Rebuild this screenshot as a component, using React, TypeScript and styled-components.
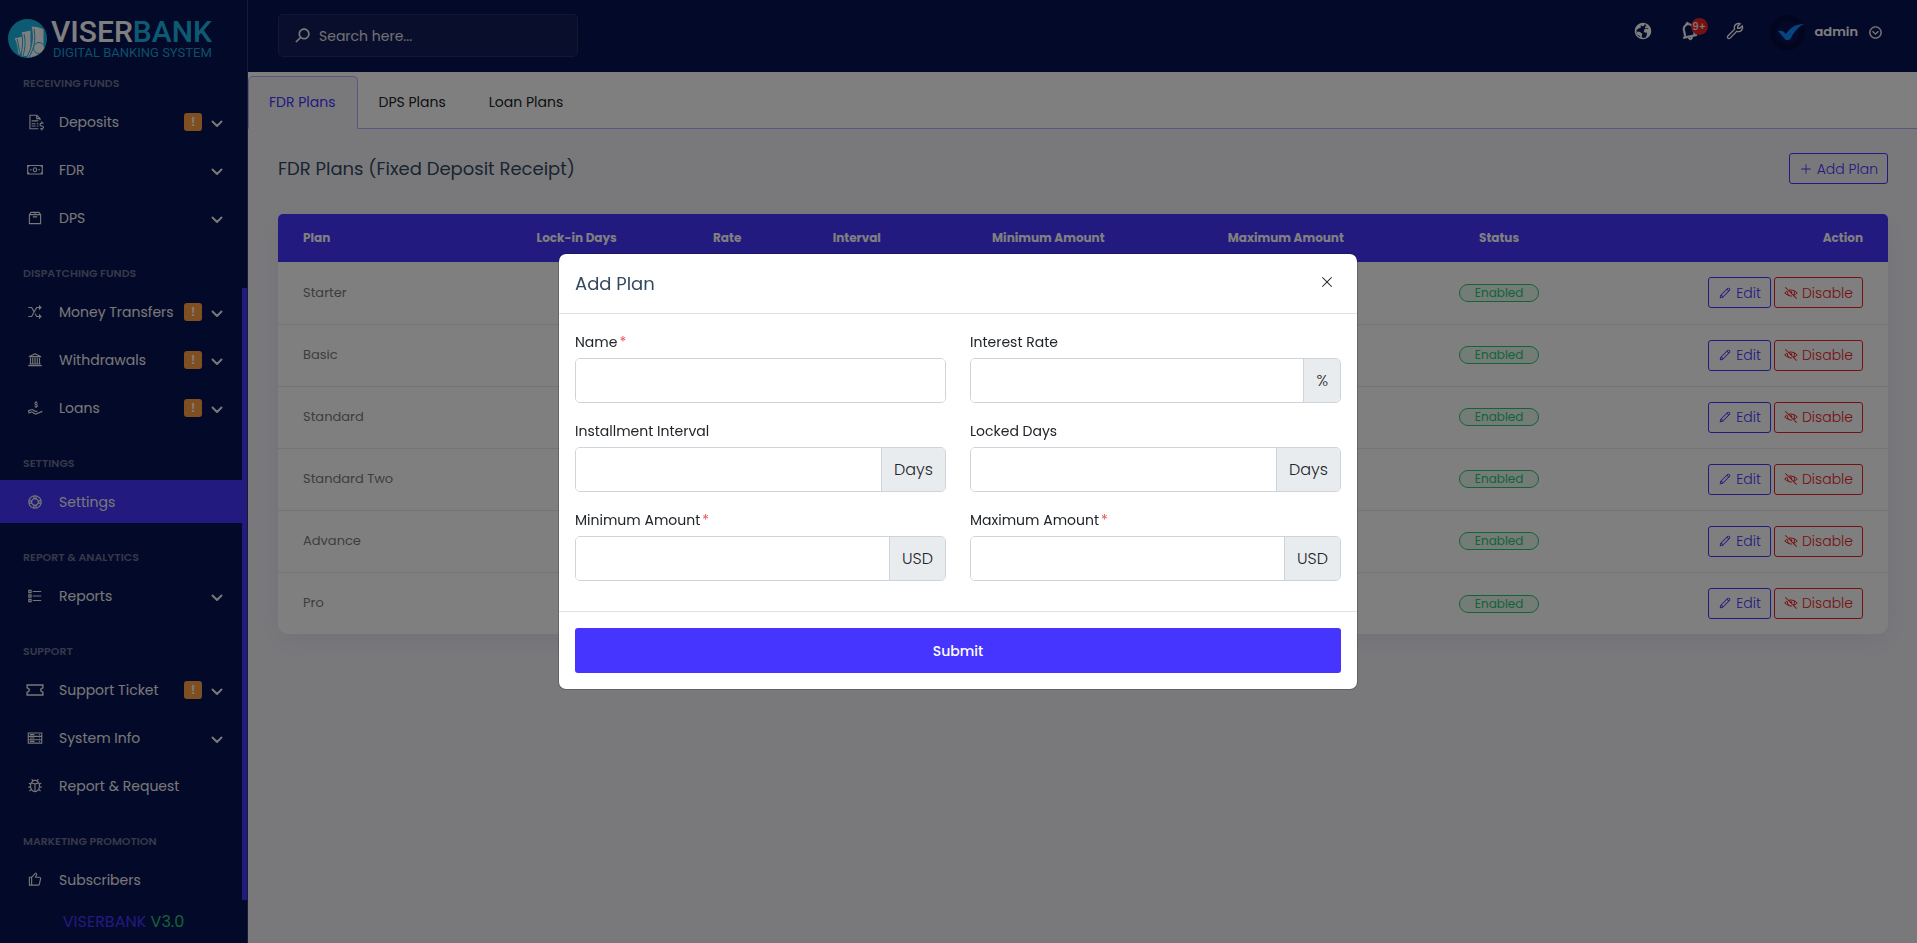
import React from "react";
import styled, { createGlobalStyle, css } from "styled-components";
import {
  LiaFileInvoiceDollarSolid,
  LiaMoneyBillSolid,
  LiaBoxSolid,
  LiaRandomSolid,
  LiaUniversitySolid,
  LiaHandHoldingUsdSolid,
  LiaLifeRingSolid,
  LiaListSolid,
  LiaServerSolid,
  LiaBugSolid,
  LiaThumbsUp,
  LiaGlobeSolid,
  LiaBell,
  LiaWrenchSolid,
  LiaSearchSolid,
  LiaChevronCircleDownSolid,
  LiaPlusSolid,
  LiaPenSolid,
  LiaEyeSlashSolid,
  LiaTimesSolid,
} from "react-icons/lia";

const color = {
  navy: "#071251",
  primary: "#4634ff",
  tabLine: "#b5adff",
  page: "#f3f3f9",
  success: "#28c76f",
  danger: "#eb2222",
  warning: "#ff9f43",
  heading: "#34495e",
  muted: "#7a7a7a",
  inputLine: "#ced4da",
};

const GlobalStyle = createGlobalStyle`
  *, *::before, *::after { box-sizing: border-box; }
  body {
    margin: 0;
    background: ${color.page};
    color: #212529;
    font-family: Poppins, Inter, "Open Sans", sans-serif;
    font-size: 14px;
    line-height: 20px;
  }
  button, input { font: inherit; }
  h1, h2, h3, p, ul { margin: 0; padding: 0; font-weight: 400; }
  ul { list-style: none; }
  a { color: inherit; text-decoration: none; }
`;

const Shell = styled.div`
  display: flex;
  min-height: 100vh;
`;

/* ---------- sidebar ---------- */

const Sidebar = styled.aside`
  display: flex;
  flex-direction: column;
  flex: none;
  width: 248px;
  height: 100vh;
  background: ${color.navy};
  border-right: 1px solid #2c3669;
`;

const Brand = styled.a`
  display: flex;
  gap: 4px;
  height: 61px;
  padding: 19px 0 0 8px;
  font-family: Roboto, "Open Sans", sans-serif;
`;

const BrandText = styled.span`
  display: flex;
  flex-direction: column;
`;

const BrandName = styled.span`
  color: #fff;
  font-size: 30px;
  font-weight: 500;
  line-height: 26px;

  em {
    color: #1bb7e5;
    font-style: normal;
  }
`;

const BrandTag = styled.span`
  padding-left: 2px;
  color: #1b9fd6;
  font-size: 13px;
  line-height: 16px;
  white-space: nowrap;
`;

const MenuArea = styled.div`
  display: flex;
  flex: 1;
  min-height: 0;
`;

const Menu = styled.nav`
  flex: 1;
  overflow: hidden;
`;

const Rail = styled.div`
  display: flex;
  flex-direction: column;
  justify-content: flex-end;
  width: 5px;
`;

const Thumb = styled.div`
  height: 73%;
  background: ${color.primary};
`;

const MenuTitle = styled.h2`
  padding: 12px 23px 7px;
  color: #6c7394;
  font-size: 11px;
  font-weight: 600;
  line-height: 20px;
  text-transform: uppercase;
`;

const MenuList = styled.ul`
  display: grid;
  gap: 5px;
  padding-bottom: 12px;
`;

const MenuLink = styled.a<{ $active?: boolean }>`
  display: flex;
  align-items: center;
  height: 43px;
  padding: 0 18px 0 26px;
  color: #f0f0f0;
  font-size: 14px;
  background: ${(p) => (p.$active ? color.primary : "transparent")};

  > svg:first-child {
    width: 18px;
    height: 18px;
    margin-right: 15px;
  }
`;

const MenuLabel = styled.span`
  flex: 1;
  white-space: nowrap;
`;

const Alert = styled.span`
  width: 18px;
  height: 18px;
  margin-right: 8px;
  border-radius: 3px;
  background: ${color.warning};
  color: #fff;
  font-size: 12px;
  font-weight: 600;
  line-height: 18px;
  text-align: center;
`;

const ArrowIcon = styled.svg`
  width: 14px;
  height: 14px;
  margin-top: 4px;
`;

const Version = styled.p`
  height: 43px;
  color: ${color.primary};
  font-size: 16px;
  line-height: 44px;
  text-align: center;

  span {
    color: ${color.success};
  }
`;

/* ---------- top bar ---------- */

const Main = styled.div`
  flex: 1;
  min-width: 0;
`;

const TopBar = styled.header`
  display: flex;
  align-items: flex-start;
  justify-content: space-between;
  height: 72px;
  padding: 14px 34px 0 30px;
  background: ${color.navy};
  color: #fff;
`;

const Search = styled.label`
  display: flex;
  align-items: center;
  gap: 8px;
  width: 300px;
  height: 43px;
  padding: 0 15px;
  border: 1px solid #263063;
  border-radius: 5px;
  background: #121c59;

  svg {
    width: 17px;
    height: 17px;
    stroke: currentColor;
    stroke-width: 1;
  }

  input {
    flex: 1;
    min-width: 0;
    padding: 0;
    border: 0;
    outline: 0;
    background: none;
    color: #fff;
    font-size: 14px;
  }

  input::placeholder {
    color: #e0e0e6;
    opacity: 1;
  }
`;

const Tools = styled.div`
  display: flex;
  align-items: center;
  gap: 24px;
  height: 36px;
`;

const ToolButton = styled.button`
  position: relative;
  display: flex;
  margin-top: -2px;
  padding: 0;
  border: 0;
  background: none;
  color: #fff;

  svg {
    width: 22px;
    height: 22px;
  }
`;

const RingingBell = styled(LiaBell)`
  stroke: currentColor;
  stroke-width: 1;
  transform: rotate(-12deg);
`;

const Count = styled.span`
  position: absolute;
  top: -2px;
  right: -8px;
  width: 17px;
  height: 17px;
  border-radius: 50%;
  background: ${color.danger};
  font-size: 10px;
  font-weight: 500;
  line-height: 17px;
  text-align: center;
`;

const Profile = styled.button`
  display: flex;
  align-items: center;
  gap: 10px;
  padding: 0;
  border: 0;
  background: none;
  color: #fff;
  font-size: 13px;
  font-weight: 600;

  > svg:last-child {
    width: 15px;
    height: 15px;
    stroke: currentColor;
    stroke-width: 1;
  }
`;

/* ---------- tabs and page head ---------- */

const Tabs = styled.nav`
  display: flex;
  align-items: flex-end;
  height: 57px;
  border-bottom: 1px solid ${color.tabLine};
  background: #fff;
`;

const Tab = styled.a<{ $active?: boolean }>`
  height: 53px;
  margin-bottom: -1px;
  padding: 0 21px 0 20px;
  border: 1px solid transparent;
  border-radius: 5px 5px 0 0;
  font-size: 14px;
  line-height: 51px;

  ${(p) =>
    p.$active &&
    css`
      border-color: ${color.tabLine} ${color.tabLine} ${color.page};
      background: ${color.page};
      color: ${color.primary};
    `}
`;

const Content = styled.main`
  padding: 24px 29px 30px 30px;
`;

const PageHead = styled.div`
  display: flex;
  align-items: center;
  justify-content: space-between;
  margin-bottom: 30px;
`;

const PageTitle = styled.h1`
  color: ${color.heading};
  font-size: 18px;
`;

const OutlineButton = styled.button<{ $tone: string }>`
  display: inline-flex;
  align-items: center;
  gap: 4px;
  height: 31px;
  padding: 0 9px;
  border: 1px solid ${(p) => p.$tone};
  border-radius: 3px;
  background: none;
  color: ${(p) => p.$tone};
  font-size: 14px;
  font-weight: 300;

  svg {
    width: 14px;
    height: 14px;
  }
`;

/* ---------- table ---------- */

const Card = styled.div`
  overflow: hidden;
  border-radius: 5px 5px 10px 10px;
  background: #fff;
  box-shadow: 0 8px 25px rgba(138, 152, 172, 0.12);
`;

const PlanTable = styled.table`
  width: 100%;
  border-collapse: collapse;
  table-layout: fixed;

  th,
  td {
    padding: 0 25px;
    text-align: center;
    white-space: nowrap;
  }

  th:first-child,
  td:first-child {
    text-align: left;
  }

  th:last-child,
  td:last-child {
    text-align: right;
  }

  th {
    height: 48px;
    background: ${color.primary};
    color: #fff;
    font-size: 12px;
    font-weight: 700;
  }

  td {
    height: 62px;
    border-bottom: 1px solid #e8e8e8;
    color: ${color.muted};
    font-size: 13px;
  }

  tr:last-child td {
    border-bottom: 0;
  }
`;

const Status = styled.span`
  display: inline-block;
  width: 80px;
  border: 1px solid ${color.success};
  border-radius: 9px;
  background: rgba(40, 199, 111, 0.1);
  color: ${color.success};
  font-size: 12px;
  line-height: 16px;
  vertical-align: middle;
`;

const Actions = styled.div`
  display: flex;
  justify-content: flex-end;
  gap: 3px;
`;

/* ---------- dialog ---------- */

const Backdrop = styled.div`
  position: fixed;
  inset: 0;
  display: flex;
  align-items: center;
  justify-content: center;
  padding-right: 1px;
  background: rgba(0, 0, 0, 0.5);
`;

const Dialog = styled.form`
  width: 100%;
  max-width: 800px;
  border: 1px solid rgba(0, 0, 0, 0.2);
  border-radius: 8px;
  background: #fff;
  background-clip: padding-box;
`;

const DialogHead = styled.header`
  display: flex;
  align-items: center;
  justify-content: space-between;
  height: 60px;
  padding: 0 16px;
  border-bottom: 1px solid #dee2e6;
`;

const DialogTitle = styled.h2`
  color: ${color.heading};
  font-size: 18px;
`;

const CloseButton = styled.button`
  display: flex;
  padding: 0 6px 4px;
  border: 0;
  background: none;
  color: #222;

  svg {
    width: 16px;
    height: 16px;
  }
`;

const DialogBody = styled.div`
  display: grid;
  grid-template-columns: 1fr 1fr;
  gap: 16px 24px;
  padding: 16px 16px 30px;
`;

const Field = styled.div`
  label {
    display: block;
    margin-bottom: 4px;
    font-size: 14px;
    line-height: 24px;
  }
`;

const Required = styled.span`
  margin-left: 2px;
  color: #ea5455;
`;

const InputGroup = styled.div`
  display: flex;
  height: 45px;
  overflow: hidden;
  border: 1px solid ${color.inputLine};
  border-radius: 5px;

  input {
    flex: 1;
    min-width: 0;
    padding: 0 12px;
    border: 0;
    outline: 0;
    background: #fff;
  }
`;

const Unit = styled.span`
  padding: 0 12px;
  border-left: 1px solid ${color.inputLine};
  background: #e9ecef;
  font-size: 16px;
  font-weight: 300;
  line-height: 43px;
`;

const DialogFoot = styled.footer`
  padding: 16px;
  border-top: 1px solid #dee2e6;
`;

const SubmitButton = styled.button`
  width: 100%;
  height: 45px;
  border: 0;
  border-radius: 3px;
  background: ${color.primary};
  color: #fff;
  font-size: 14px;
  font-weight: 500;
`;

/* ---------- drawings ---------- */

const LogoMark = () => (
  <svg width="39" height="39" viewBox="0 0 39 39" aria-hidden="true">
    <clipPath id="mark">
      <circle cx="19.5" cy="19.5" r="19.5" />
    </clipPath>
    <g clipPath="url(#mark)">
      <rect width="39" height="39" fill="#1bb7e5" />
      <g fill="#fff" stroke="#1bb7e5" strokeWidth="1">
        <path d="M6 19l9-2v20l-5-2C9 30 9 24 6 19z" />
        <path d="M13 13l10-2v26l-10 1c1-9 3-17 0-25z" />
        <path d="M23 7c5 0 9 1 13 3v20c-3 5-9 9-18 9 6-9 8-20 5-32z" />
      </g>
      <g fill="none" stroke="#1bb7e5" strokeWidth="1">
        <path d="M9 20c2 5 1 11 4 16M16 15c2 8 1 15-1 22M26 10c2 11 0 20-5 28" />
        <circle cx="31" cy="29" r="5.5" fill="#fff" />
      </g>
    </g>
  </svg>
);

const Avatar = () => (
  <svg width="35" height="35" viewBox="0 0 35 35" aria-hidden="true">
    <circle cx="17.5" cy="17.5" r="17.5" fill="#030a3c" />
    <circle cx="17.5" cy="17.5" r="12" fill="#061050" />
    <path d="M8 16c3-1 6 0 8 3 4-6 9-10 18-10-6 3-10 8-13 14-2 3-5 3-7 0z" fill="#0d8bff" />
  </svg>
);

const TicketIcon = () => (
  <svg viewBox="0 0 32 32" fill="none" stroke="currentColor" strokeWidth="2.5" aria-hidden="true">
    <path d="M2 7h28v5c-3 1-4 2-4 4s1 3 4 4v5H2v-5c3-1 4-2 4-4s-1-3-4-4z" />
  </svg>
);

const Arrow = () => (
  <ArrowIcon viewBox="0 0 14 14" fill="none" stroke="currentColor" strokeWidth="2" aria-hidden="true">
    <path d="M2.5 4.5L7 9l4.500-4.500" strokeLinecap="round" strokeLinejoin="round" />
  </ArrowIcon>
);

/* ---------- data ---------- */

type Item = {
  label: string;
  icon: React.ComponentType;
  alert?: boolean;
  arrow?: boolean;
  active?: boolean;
};

const menu: { title: string; items: Item[] }[] = [
  {
    title: "Receiving Funds",
    items: [
      { label: "Deposits", icon: LiaFileInvoiceDollarSolid, alert: true, arrow: true },
      { label: "FDR", icon: LiaMoneyBillSolid, arrow: true },
      { label: "DPS", icon: LiaBoxSolid, arrow: true },
    ],
  },
  {
    title: "Dispatching Funds",
    items: [
      { label: "Money Transfers", icon: LiaRandomSolid, alert: true, arrow: true },
      { label: "Withdrawals", icon: LiaUniversitySolid, alert: true, arrow: true },
      { label: "Loans", icon: LiaHandHoldingUsdSolid, alert: true, arrow: true },
    ],
  },
  { title: "Settings", items: [{ label: "Settings", icon: LiaLifeRingSolid, active: true }] },
  { title: "Report & Analytics", items: [{ label: "Reports", icon: LiaListSolid, arrow: true }] },
  {
    title: "Support",
    items: [
      { label: "Support Ticket", icon: TicketIcon, alert: true, arrow: true },
      { label: "System Info", icon: LiaServerSolid, arrow: true },
      { label: "Report & Request", icon: LiaBugSolid },
    ],
  },
  { title: "Marketing Promotion", items: [{ label: "Subscribers", icon: LiaThumbsUp }] },
];

const columns = [
  { name: "Plan", width: "13.6%" },
  { name: "Lock-in Days", width: "9.9%" },
  { name: "Rate", width: "8.8%" },
  { name: "Interval", width: "7.3%" },
  { name: "Minimum Amount", width: "16.5%" },
  { name: "Maximum Amount", width: "13%" },
  { name: "Status", width: "13.5%" },
  { name: "Action", width: "17.4%" },
];

const plans = ["Starter", "Basic", "Standard", "Standard Two", "Advance", "Pro"];

const fields = [
  { id: "name", label: "Name", required: true },
  { id: "interest-rate", label: "Interest Rate", unit: "%" },
  { id: "installment-interval", label: "Installment Interval", unit: "Days" },
  { id: "locked-days", label: "Locked Days", unit: "Days" },
  { id: "minimum-amount", label: "Minimum Amount", required: true, unit: "USD" },
  { id: "maximum-amount", label: "Maximum Amount", required: true, unit: "USD" },
];

export default function App() {
  return (
    <>
      <GlobalStyle />
      <Shell>
        <Sidebar>
          <Brand href="#">
            <LogoMark />
            <BrandText>
              <BrandName>
                VISER<em>BANK</em>
              </BrandName>
              <BrandTag>DIGITAL BANKING SYSTEM</BrandTag>
            </BrandText>
          </Brand>
          <MenuArea>
            <Menu>
              {menu.map((group) => (
                <section key={group.title}>
                  <MenuTitle>{group.title}</MenuTitle>
                  <MenuList>
                    {group.items.map(({ label, icon: Icon, alert, arrow, active }) => (
                      <li key={label}>
                        <MenuLink href="#" $active={active}>
                          <Icon />
                          <MenuLabel>{label}</MenuLabel>
                          {alert && <Alert>!</Alert>}
                          {arrow && <Arrow />}
                        </MenuLink>
                      </li>
                    ))}
                  </MenuList>
                </section>
              ))}
            </Menu>
            <Rail>
              <Thumb />
            </Rail>
          </MenuArea>
          <Version>
            VISERBANK <span>V3.0</span>
          </Version>
        </Sidebar>

        <Main>
          <TopBar>
            <Search>
              <LiaSearchSolid />
              <input type="search" placeholder="Search here..." aria-label="Search" />
            </Search>
            <Tools>
              <ToolButton type="button" aria-label="Visit website">
                <LiaGlobeSolid />
              </ToolButton>
              <ToolButton type="button" aria-label="Notifications">
                <RingingBell />
                <Count>9+</Count>
              </ToolButton>
              <ToolButton type="button" aria-label="System settings">
                <LiaWrenchSolid />
              </ToolButton>
              <Profile type="button">
                <Avatar />
                <span>admin</span>
                <LiaChevronCircleDownSolid />
              </Profile>
            </Tools>
          </TopBar>

          <Tabs>
            <Tab href="#" $active>
              FDR Plans
            </Tab>
            <Tab href="#">DPS Plans</Tab>
            <Tab href="#">Loan Plans</Tab>
          </Tabs>

          <Content>
            <PageHead>
              <PageTitle>FDR Plans (Fixed Deposit Receipt)</PageTitle>
              <OutlineButton type="button" $tone={color.primary}>
                <LiaPlusSolid />
                Add Plan
              </OutlineButton>
            </PageHead>

            <Card>
              <PlanTable>
                <colgroup>
                  {columns.map((c) => (
                    <col key={c.name} width={c.width} />
                  ))}
                </colgroup>
                <thead>
                  <tr>
                    {columns.map((c) => (
                      <th key={c.name} scope="col">
                        {c.name}
                      </th>
                    ))}
                  </tr>
                </thead>
                <tbody>
                  {plans.map((plan) => (
                    <tr key={plan}>
                      <td>{plan}</td>
                      <td />
                      <td />
                      <td />
                      <td />
                      <td />
                      <td>
                        <Status>Enabled</Status>
                      </td>
                      <td>
                        <Actions>
                          <OutlineButton type="button" $tone={color.primary}>
                            <LiaPenSolid />
                            Edit
                          </OutlineButton>
                          <OutlineButton type="button" $tone={color.danger}>
                            <LiaEyeSlashSolid />
                            Disable
                          </OutlineButton>
                        </Actions>
                      </td>
                    </tr>
                  ))}
                </tbody>
              </PlanTable>
            </Card>
          </Content>
        </Main>
      </Shell>

      <Backdrop>
        <Dialog role="dialog" aria-modal="true" aria-labelledby="dialog-title">
          <DialogHead>
            <DialogTitle id="dialog-title">Add Plan</DialogTitle>
            <CloseButton type="button" aria-label="Close">
              <LiaTimesSolid />
            </CloseButton>
          </DialogHead>
          <DialogBody>
            {fields.map((f) => (
              <Field key={f.id}>
                <label htmlFor={f.id}>
                  {f.label}
                  {f.required && <Required>*</Required>}
                </label>
                <InputGroup>
                  <input id={f.id} type="text" />
                  {f.unit && <Unit>{f.unit}</Unit>}
                </InputGroup>
              </Field>
            ))}
          </DialogBody>
          <DialogFoot>
            <SubmitButton type="submit">Submit</SubmitButton>
          </DialogFoot>
        </Dialog>
      </Backdrop>
    </>
  );
}
